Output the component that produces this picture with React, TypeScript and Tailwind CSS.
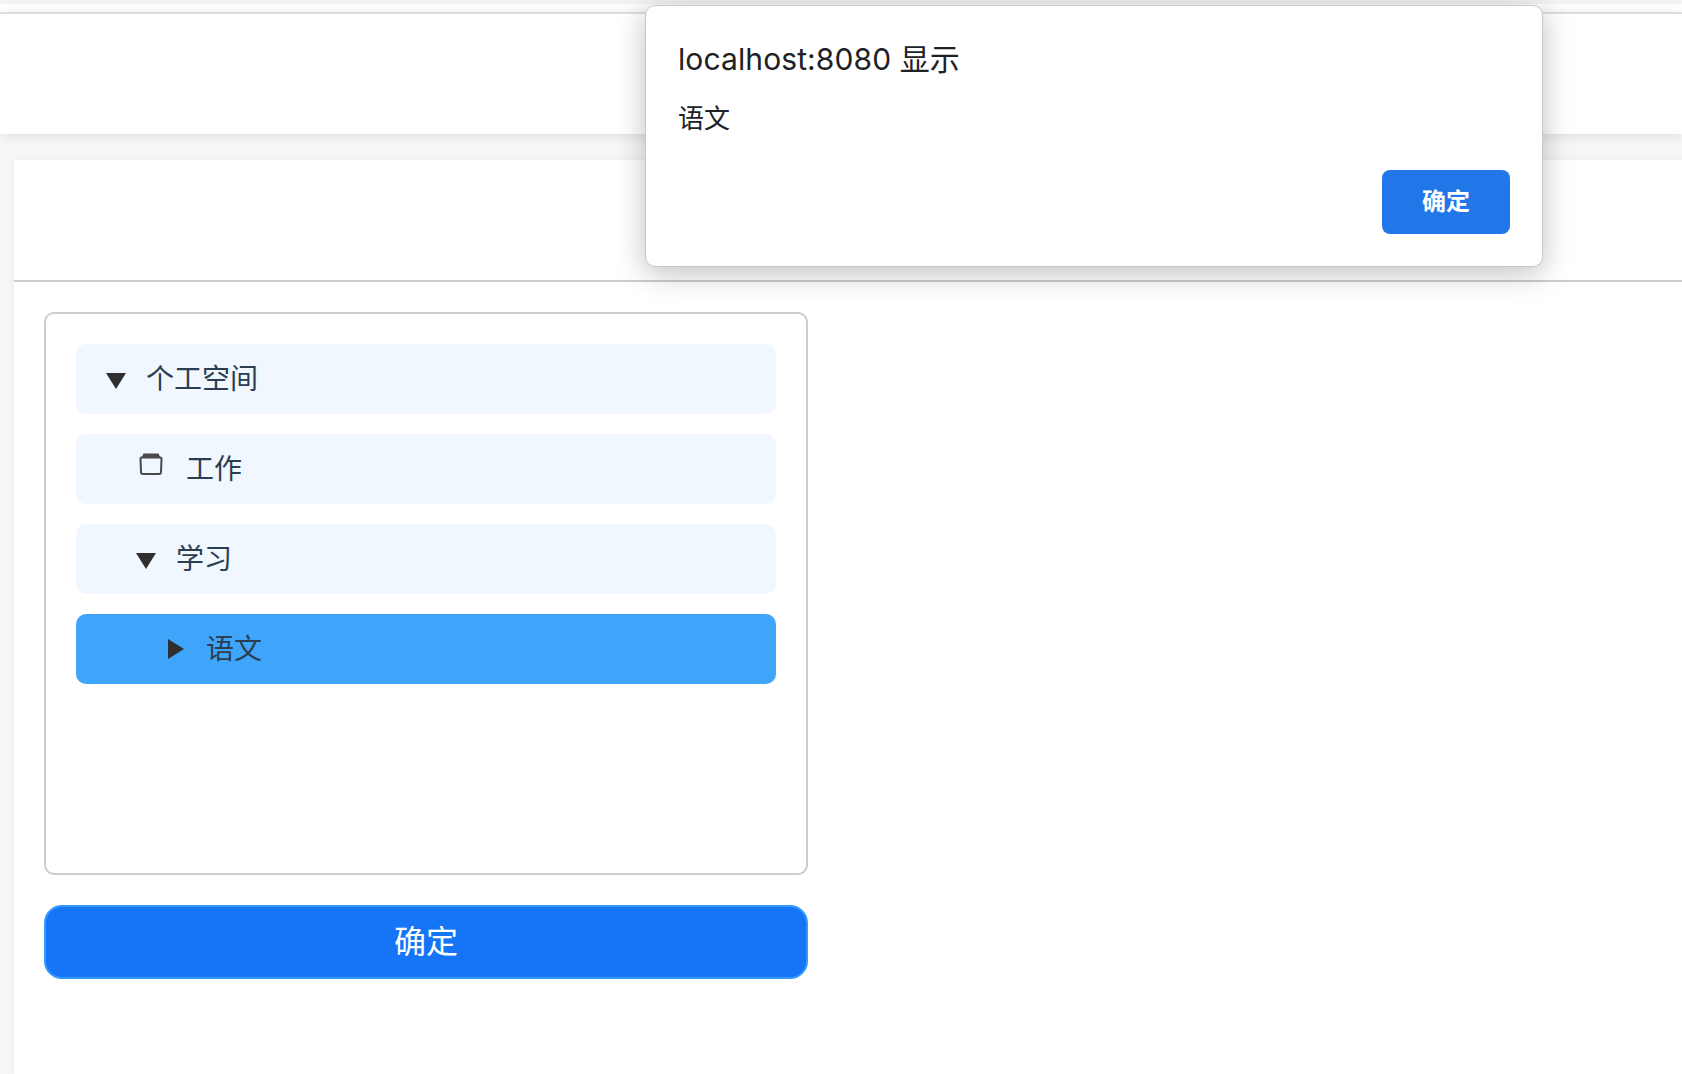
const cjk = "font-['Inter','Noto_Sans_CJK_SC',sans-serif]";

function TriDown() {
  return (
    <svg width="20" height="16" viewBox="0 0 20 16" className="mt-1 shrink-0">
      <polygon points="0,0 20,0 10,16" fill="#2f2f2f" />
    </svg>
  );
}

function TriRight() {
  return (
    <svg width="16" height="20" viewBox="0 0 16 20" className="shrink-0">
      <polygon points="0,0 16,10 0,20" fill="#2f2f2f" />
    </svg>
  );
}

function FolderIcon() {
  return (
    <svg width="24" height="22" viewBox="0 0 24 22" className="-mt-[11px] shrink-0">
      <path d="M4.500 0.500h15l2 4.500H2.500z" fill="#4a4a4a" />
      <path
        d="M2.500 4.500h19c.5 0 1 .5 1 1L22 19c0 1.200-.8 2-1.800 2H3.800C2.800 21 2 20.200 2 19L1.500 5.500c0-.5.5-1 1-1z"
        fill="none"
        stroke="#4a4a4a"
        strokeWidth="2"
      />
    </svg>
  );
}

export default function App() {
  return (
    <div className={`relative h-[1074px] w-full overflow-hidden bg-[#f7f7f7] ${cjk}`}>
      <div className="h-1 bg-[#f1f3f5]" />
      <div className="h-2 bg-white" />
      <header className="h-[122px] border-t-2 border-[#dddddd] bg-white shadow-[0_2px_12px_rgba(0,0,0,0.1)]" />

      <main className="ml-[14px] mt-[26px] h-[914px] bg-white shadow-[0_0_8px_rgba(0,0,0,0.06)]">
        <div className="h-[122px] border-b-2 border-[#cccccc]" />
        <div className="px-[30px] pt-[30px]">
          <div className="flex h-[563px] w-[764px] flex-col gap-5 rounded-[10px] border-2 border-[#cccccc] bg-white p-[30px]">
            <div className="flex h-[70px] items-center rounded-[10px] bg-[#f0f7ff] pl-[30px] text-[28px] text-[#2c3e50]">
              <TriDown />
              <span className="ml-5">个工空间</span>
            </div>
            <div className="flex h-[70px] items-center rounded-[10px] bg-[#f0f7ff] pl-[63px] text-[28px] text-[#2c3e50]">
              <FolderIcon />
              <span className="ml-[23px]">工作</span>
            </div>
            <div className="flex h-[70px] items-center rounded-[10px] bg-[#f0f7ff] pl-[60px] text-[28px] text-[#2c3e50]">
              <TriDown />
              <span className="ml-5">学习</span>
            </div>
            <div className="flex h-[70px] items-center rounded-[10px] bg-[#3fa5fa] pl-[92px] text-[28px] text-[#2c3e50]">
              <TriRight />
              <span className="ml-[22px]">语文</span>
            </div>
          </div>
          <button className="mt-[30px] flex h-[74px] w-[764px] items-center justify-center rounded-[18px] border-2 border-[#3399ff] bg-[#1575f6] text-[32px] text-white">
            确定
          </button>
        </div>
      </main>

      <div className="absolute left-[645px] top-[5px] flex h-[262px] w-[898px] flex-col rounded-[10px] border border-[#c8c8c8] bg-white px-[32px] pt-[35px] shadow-[0_6px_30px_rgba(0,0,0,0.25)]">
        <div className="text-[30px] leading-9 tracking-[0.1px] text-[#202124]">localhost:8080 显示</div>
        <div className="mt-6 text-[26px] leading-9 text-[#202124]">语文</div>
        <div className="mt-[33px] flex justify-end">
          <button className="h-16 w-32 rounded-lg bg-[#2277e8] text-2xl font-bold text-white">确定</button>
        </div>
      </div>
    </div>
  );
}
